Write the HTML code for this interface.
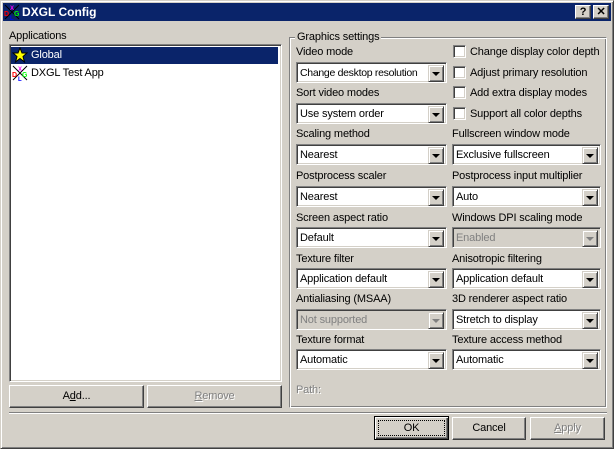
<!DOCTYPE html>
<html><head><style>
*{margin:0;padding:0;box-sizing:border-box}
body{width:614px;height:449px;background:#d4d0c8;font-family:"Liberation Sans",sans-serif;font-size:11px;letter-spacing:-0.15px;position:relative;overflow:hidden;color:#000}
.a{position:absolute}
.win{left:0;top:0;width:614px;height:449px;border:1px solid;border-color:#d4d0c8 #404040 #404040 #d4d0c8;box-shadow:inset 1px 1px #fff,inset -1px -1px #808080}
.tb{left:3px;top:3px;width:608px;height:18px;background:#0a246a;color:#fff;font-weight:bold;font-size:12px;line-height:18px;padding-left:19px;letter-spacing:0}
.tbtn{width:16px;height:14px;top:5px;background:#d4d0c8;border:1px solid;border-color:#fff #404040 #404040 #fff;box-shadow:inset -1px -1px #808080;font-weight:bold;font-size:11px;text-align:center;line-height:12px;color:#000}
.sunk{border:1px solid;border-color:#808080 #fff #fff #808080;box-shadow:inset 1px 1px #404040,inset -1px -1px #d4d0c8;background:#fff}
.btn{border:1px solid;border-color:#fff #404040 #404040 #fff;box-shadow:inset -1px -1px #808080;text-align:center;line-height:21px;background:#d4d0c8}
.dis{color:#808080;text-shadow:1px 1px #fff}
.lbl{white-space:nowrap;line-height:13px}
.cb{height:21px;padding:1px 0 0 3px;line-height:19px;white-space:nowrap;overflow:hidden}
.cb.d{background:#d4d0c8;color:#808080}
.dd{position:absolute;right:2px;top:2px;width:16px;height:17px;background:#d4d0c8;border:1px solid;border-color:#d4d0c8 #404040 #404040 #d4d0c8;box-shadow:inset 1px 1px #fff,inset -1px -1px #808080}
.dd:after{content:"";position:absolute;left:3px;top:6px;border-left:4px solid transparent;border-right:4px solid transparent;border-top:4px solid #000}
.cb.d .dd:after{border-top-color:#808080}
.chk{width:13px;height:13px}
</style></head><body>
<div class="a win"></div>
<div class="a tb">DXGL Config</div>
<svg class="a" style="left:4px;top:4px" width="16" height="16"><line x1="1" y1="1" x2="15" y2="15" stroke="#000"/><line x1="15" y1="1" x2="1" y2="15" stroke="#000"/><text x="0" y="12" font-size="7" fill="#f00" font-weight="bold" font-family="Liberation Sans">D</text><text x="10" y="12" font-size="7" fill="#0f0" font-weight="bold" font-family="Liberation Sans">G</text><text x="6" y="6" font-size="6" fill="#f0f" font-weight="bold" font-family="Liberation Sans">X</text><text x="6" y="16" font-size="6" fill="#00f" font-weight="bold" font-family="Liberation Sans">L</text></svg>
<div class="a tbtn" style="left:575px">?</div>
<div class="a tbtn" style="left:593px">✕</div>

<div class="a lbl" style="left:9px;top:30px">Applications</div>
<div class="a sunk" style="left:9px;top:44px;width:273px;height:338px"></div>
<div class="a" style="left:11px;top:47px;width:267px;height:17px;background:#0a246a;color:#fff;line-height:17px;padding-left:20px">Global</div>
<svg class="a" style="left:12px;top:47px" width="16" height="16"><polygon points="8,1 10,6 15,6 11,9.5 12.5,15 8,11.5 3.5,15 5,9.5 1,6 6,6" fill="#ff0" stroke="#000"/></svg>
<div class="a" style="left:31px;top:65px;line-height:17px">DXGL Test App</div>
<svg class="a" style="left:12px;top:65px" width="16" height="16"><line x1="1" y1="1" x2="15" y2="15" stroke="#000"/><line x1="15" y1="1" x2="1" y2="15" stroke="#000"/><text x="0" y="12" font-size="7" fill="#f00" font-weight="bold" font-family="Liberation Sans">D</text><text x="10" y="12" font-size="7" fill="#0f0" font-weight="bold" font-family="Liberation Sans">G</text><text x="6" y="6" font-size="6" fill="#f0f" font-weight="bold" font-family="Liberation Sans">X</text><text x="6" y="16" font-size="6" fill="#00f" font-weight="bold" font-family="Liberation Sans">L</text></svg>
<div class="a btn" style="left:9px;top:385px;width:135px;height:23px">A<u>d</u>d...</div>
<div class="a btn dis" style="left:147px;top:385px;width:135px;height:23px"><u>R</u>emove</div>

<div class="a" style="left:289px;top:37px;width:318px;height:371px;border:1px solid;border-color:#808080 #fff #fff #808080;box-shadow:inset 1px 1px #fff,inset -1px -1px #808080"></div>
<div class="a lbl" style="left:295px;top:31px;background:#d4d0c8;padding:0 2px">Graphics settings</div>

<div class="a lbl" style="left:296px;top:46px">Video mode</div>
<div class="a sunk cb" style="left:296px;top:62px;width:151px;font-size:10.5px;letter-spacing:-0.3px">Change desktop resolution<div class="dd"></div></div>
<div class="a lbl" style="left:296px;top:87px">Sort video modes</div>
<div class="a sunk cb" style="left:296px;top:103px;width:151px">Use system order<div class="dd"></div></div>
<div class="a lbl" style="left:296px;top:128px">Scaling method</div>
<div class="a sunk cb" style="left:296px;top:144px;width:151px">Nearest<div class="dd"></div></div>
<div class="a lbl" style="left:296px;top:170px">Postprocess scaler</div>
<div class="a sunk cb" style="left:296px;top:186px;width:151px">Nearest<div class="dd"></div></div>
<div class="a lbl" style="left:296px;top:212px">Screen aspect ratio</div>
<div class="a sunk cb" style="left:296px;top:227px;width:151px">Default<div class="dd"></div></div>
<div class="a lbl" style="left:296px;top:253px">Texture filter</div>
<div class="a sunk cb" style="left:296px;top:268px;width:151px">Application default<div class="dd"></div></div>
<div class="a lbl" style="left:296px;top:293px">Antialiasing (MSAA)</div>
<div class="a sunk cb d" style="left:296px;top:309px;width:151px">Not supported<div class="dd"></div></div>
<div class="a lbl" style="left:296px;top:334px">Texture format</div>
<div class="a sunk cb" style="left:296px;top:349px;width:151px">Automatic<div class="dd"></div></div>

<div class="a sunk chk" style="left:453px;top:45px"></div><div class="a lbl" style="left:470px;top:46px">Change display color depth</div>
<div class="a sunk chk" style="left:453px;top:66px"></div><div class="a lbl" style="left:470px;top:67px">Adjust primary resolution</div>
<div class="a sunk chk" style="left:453px;top:86px"></div><div class="a lbl" style="left:470px;top:87px">Add extra display modes</div>
<div class="a sunk chk" style="left:453px;top:107px"></div><div class="a lbl" style="left:470px;top:108px">Support all color depths</div>

<div class="a lbl" style="left:452px;top:128px">Fullscreen window mode</div>
<div class="a sunk cb" style="left:452px;top:144px;width:149px">Exclusive fullscreen<div class="dd"></div></div>
<div class="a lbl" style="left:452px;top:170px">Postprocess input multiplier</div>
<div class="a sunk cb" style="left:452px;top:186px;width:149px">Auto<div class="dd"></div></div>
<div class="a lbl" style="left:452px;top:212px">Windows DPI scaling mode</div>
<div class="a sunk cb d" style="left:452px;top:227px;width:149px">Enabled<div class="dd"></div></div>
<div class="a lbl" style="left:452px;top:253px">Anisotropic filtering</div>
<div class="a sunk cb" style="left:452px;top:268px;width:149px">Application default<div class="dd"></div></div>
<div class="a lbl" style="left:452px;top:293px">3D renderer aspect ratio</div>
<div class="a sunk cb" style="left:452px;top:309px;width:149px">Stretch to display<div class="dd"></div></div>
<div class="a lbl" style="left:452px;top:334px">Texture access method</div>
<div class="a sunk cb" style="left:452px;top:349px;width:149px">Automatic<div class="dd"></div></div>

<div class="a lbl dis" style="left:296px;top:384px">Path:</div>

<div class="a" style="left:9px;top:412px;width:598px;height:2px;border-top:1px solid #808080;border-bottom:1px solid #fff"></div>

<div class="a btn" style="left:374px;top:416px;width:75px;height:24px;border:1px solid #000;box-shadow:inset 1px 1px #fff,inset -1px -1px #404040,inset -2px -2px #808080"><div style="position:absolute;left:3px;top:3px;right:3px;bottom:3px;border:1px dotted #000;line-height:15px">OK</div></div>
<div class="a btn" style="left:452px;top:417px;width:74px;height:23px">Cancel</div>
<div class="a btn dis" style="left:530px;top:417px;width:75px;height:23px"><u>A</u>pply</div>
</body></html>
